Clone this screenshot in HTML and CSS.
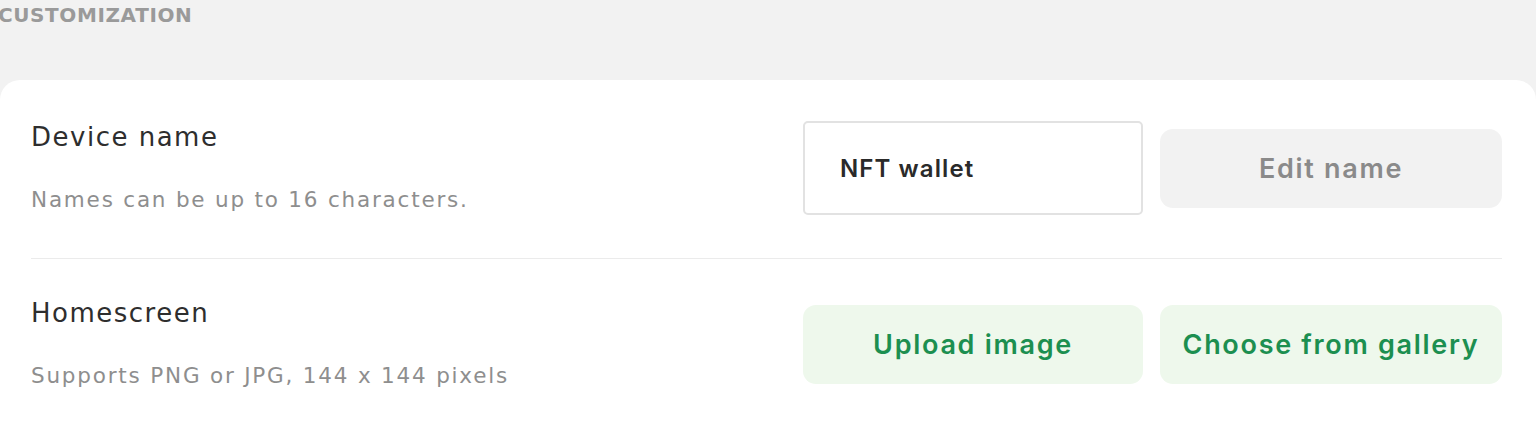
FILE: index.html
```html
<!DOCTYPE html>
<html>
<head>
<meta charset="utf-8">
<link rel="stylesheet" href="styles.css">
</head>
<body>
<div class="page">
  <h2 class="section-title">CUSTOMIZATION</h2>
  <div class="card">
    <div class="row row-first">
      <div class="info">
        <div class="label">Device name</div>
        <div class="hint">Names can be up to 16 characters.</div>
      </div>
      <div class="input-box">NFT wallet</div>
      <button class="btn btn-grey">Edit name</button>
    </div>
    <div class="divider"></div>
    <div class="row row-second">
      <div class="info">
        <div class="label">Homescreen</div>
        <div class="hint">Supports PNG or JPG, 144 x 144 pixels</div>
      </div>
      <button class="btn btn-green">Upload image</button>
      <button class="btn btn-green">Choose from gallery</button>
    </div>
  </div>
</div>
</body>
</html>
```
FILE: styles.css
```css
* { box-sizing: border-box; }
html, body { margin: 0; padding: 0; }
body {
  background: #f2f2f2;
  font-family: "DejaVu Sans", "Liberation Sans", sans-serif;
  width: 1536px;
  height: 434px;
  overflow: hidden;
}
.page {
  padding-top: 3px;
}
.section-title {
  margin: 0 0 0 -2px;
  font-size: 20px;
  line-height: 24px;
  font-weight: 700;
  color: #9a9a9a;
  letter-spacing: 0.6px;
  height: 77px;
}
.card {
  background: #ffffff;
  border-radius: 20px 20px 0 0;
  padding: 0 34px 0 31px;
  height: 354px;
}
.row {
  display: grid;
  grid-template-columns: 1fr 340px 342px;
  column-gap: 17px;
  align-items: center;
}
.row-first { padding: 41px 0 43px; }
.row-second { padding: 38px 0 20px; }
.divider {
  height: 1px;
  background: #ebebeb;
}
.info {
  height: 94px;
}
.label {
  font-size: 26px;
  line-height: 32px;
  color: #2e2e2e;
  letter-spacing: 1.5px;
}
.hint {
  margin-top: 33px;
  font-size: 21.5px;
  line-height: 28px;
  color: #8e8e8e;
  letter-spacing: 1.8px;
}
.input-box {
  height: 94px;
  border: 2px solid #e2e2e2;
  border-radius: 5px;
  padding-left: 35px;
  display: flex;
  align-items: center;
  font-family: Inter, sans-serif;
  font-weight: 600;
  font-size: 24px;
  color: #2a2a2a;
  letter-spacing: 1.1px;
}
.btn {
  height: 79px;
  border: none;
  border-radius: 13px;
  font-family: Inter, sans-serif;
  font-weight: 600;
  font-size: 27px;
  letter-spacing: 1.7px;
  cursor: pointer;
}
.btn-grey {
  background: #f2f2f2;
  color: #8a8a8a;
}
.btn-green {
  background: #eef8ec;
  color: #1c8f50;
}
```
